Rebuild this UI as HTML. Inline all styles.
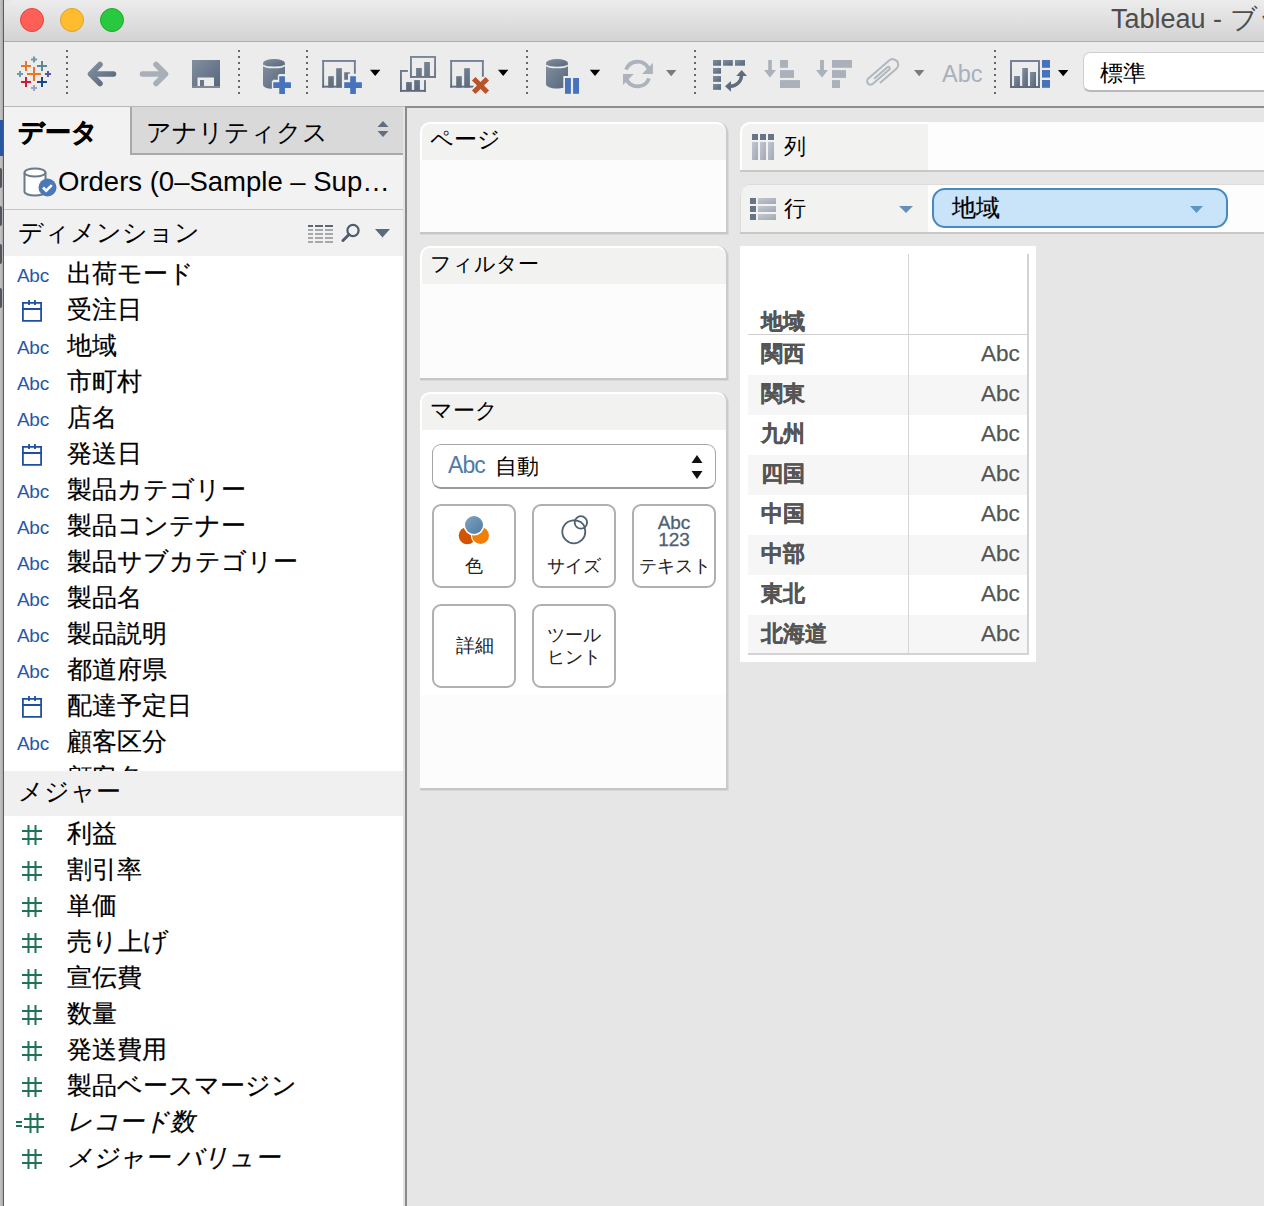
<!DOCTYPE html>
<html><head><meta charset="utf-8">
<style>
*{box-sizing:border-box;margin:0;padding:0}
html,body{width:1264px;height:1206px;overflow:hidden;background:#e6e6e6;font-family:"Liberation Sans",sans-serif;color:#000}
.a{position:absolute}
.t{position:absolute;white-space:nowrap;line-height:1}
.fld{font-size:25px;line-height:26px;-webkit-text-stroke:0.2px #000}
.card{position:absolute;width:308px;background:#fcfcfc;border-radius:10px 10px 0 0;border-right:2px solid #cbcbcb;border-bottom:2px solid #c6c6c6;overflow:hidden;box-shadow:1px 1px 0 #d9d9d9}
.hdr{position:absolute;left:0;top:0;width:306px;background:#f2f2f0;border-top:2px solid #fff;border-left:2px solid #fff;border-radius:10px 10px 0 0}
.mb{position:absolute;width:84px;height:84px;border:2px solid #b0b0b0;border-radius:9px;background:#fff}
.mbt{font-size:18px;color:#222;margin-top:2px}
.shelf{position:absolute;left:740px;width:524px;background:#fdfdfd;border-radius:10px 0 0 0;border-bottom:2px solid #c8c8c8;overflow:hidden}
.lab{position:absolute;left:0;top:0;width:188px;height:100%;background:#f2f2f1;border-top:2px solid #fff;border-left:2px solid #fff;border-radius:10px 0 0 0}
.rh{font-size:22px;font-weight:bold;color:#555;-webkit-text-stroke:0.35px #555}
.ab{font-size:22.5px;color:#555;-webkit-text-stroke:0.25px #555}
.abc{font-size:19px;color:#2856a3;line-height:20px;margin-top:3px;letter-spacing:-0.3px}
</style></head><body>
<!-- left background strip -->
<div class="a" style="left:0;top:0;width:4px;height:1206px;background:linear-gradient(90deg,#c4c4c4,#a4a4a4)"></div>
<div class="a" style="left:3px;top:0;width:1px;height:1206px;background:#5c5c5c"></div>
<div class="a" style="left:0;top:120px;width:3px;height:36px;background:#2a55a0"></div>
<div class="a" style="left:0;top:168px;width:2px;height:20px;background:#50555e;border-radius:0 2px 2px 0"></div>
<div class="a" style="left:0;top:206px;width:2px;height:20px;background:#50555e;border-radius:0 2px 2px 0"></div>
<div class="a" style="left:0;top:244px;width:2px;height:20px;background:#50555e;border-radius:0 2px 2px 0"></div>
<div class="a" style="left:0;top:288px;width:2px;height:20px;background:#50555e;border-radius:0 2px 2px 0"></div>
<!-- title bar -->
<div class="a" style="left:4px;top:0;width:1260px;height:42px;background:linear-gradient(#ececec,#d3d3d3);border-top-left-radius:9px;border-bottom:1px solid #adadad"></div>
<div class="a" style="left:20px;top:8px;width:24px;height:24px;border-radius:50%;background:#ff5f57;border:1px solid #e0443e"></div>
<div class="a" style="left:60px;top:8px;width:24px;height:24px;border-radius:50%;background:#febc2e;border:1px solid #dda028"></div>
<div class="a" style="left:100px;top:8px;width:24px;height:24px;border-radius:50%;background:#28c941;border:1px solid #1aab29"></div>
<div class="t" style="left:1111px;top:6px;font-size:27px;color:#4d4d4d">Tableau - ブック1</div>
<!-- toolbar -->
<div class="a" style="left:4px;top:42px;width:1260px;height:64px;background:#ececec"></div>
<div class="a" style="left:4px;top:106px;width:401px;height:1px;background:#b8b8b8"></div>
<div class="a" style="left:405px;top:106px;width:859px;height:2px;background:#8e8e8e"></div>


<!-- toolbar icons -->
<svg class="a" style="left:0;top:0" width="1264" height="106" viewBox="0 0 1264 106">
<defs>
<linearGradient id="gI" x1="0" y1="0" x2="1" y2="1"><stop offset="0" stop-color="#8290a0"/><stop offset="1" stop-color="#56657a"/></linearGradient>
<linearGradient id="gI2" gradientUnits="userSpaceOnUse" x1="0" y1="56" x2="0" y2="94"><stop offset="0" stop-color="#7a8799"/><stop offset="1" stop-color="#5a6779"/></linearGradient>
</defs>
<g fill="#666"><rect x="66" y="50" width="2" height="2"/><rect x="66" y="56" width="2" height="2"/><rect x="66" y="62" width="2" height="2"/><rect x="66" y="68" width="2" height="2"/><rect x="66" y="74" width="2" height="2"/><rect x="66" y="80" width="2" height="2"/><rect x="66" y="86" width="2" height="2"/><rect x="66" y="92" width="2" height="2"/><rect x="238" y="50" width="2" height="2"/><rect x="238" y="56" width="2" height="2"/><rect x="238" y="62" width="2" height="2"/><rect x="238" y="68" width="2" height="2"/><rect x="238" y="74" width="2" height="2"/><rect x="238" y="80" width="2" height="2"/><rect x="238" y="86" width="2" height="2"/><rect x="238" y="92" width="2" height="2"/><rect x="306" y="50" width="2" height="2"/><rect x="306" y="56" width="2" height="2"/><rect x="306" y="62" width="2" height="2"/><rect x="306" y="68" width="2" height="2"/><rect x="306" y="74" width="2" height="2"/><rect x="306" y="80" width="2" height="2"/><rect x="306" y="86" width="2" height="2"/><rect x="306" y="92" width="2" height="2"/><rect x="526" y="50" width="2" height="2"/><rect x="526" y="56" width="2" height="2"/><rect x="526" y="62" width="2" height="2"/><rect x="526" y="68" width="2" height="2"/><rect x="526" y="74" width="2" height="2"/><rect x="526" y="80" width="2" height="2"/><rect x="526" y="86" width="2" height="2"/><rect x="526" y="92" width="2" height="2"/><rect x="694" y="50" width="2" height="2"/><rect x="694" y="56" width="2" height="2"/><rect x="694" y="62" width="2" height="2"/><rect x="694" y="68" width="2" height="2"/><rect x="694" y="74" width="2" height="2"/><rect x="694" y="80" width="2" height="2"/><rect x="694" y="86" width="2" height="2"/><rect x="694" y="92" width="2" height="2"/><rect x="994" y="50" width="2" height="2"/><rect x="994" y="56" width="2" height="2"/><rect x="994" y="62" width="2" height="2"/><rect x="994" y="68" width="2" height="2"/><rect x="994" y="74" width="2" height="2"/><rect x="994" y="80" width="2" height="2"/><rect x="994" y="86" width="2" height="2"/><rect x="994" y="92" width="2" height="2"/></g>
<!-- tableau logo -->
<g stroke-width="2">
<path d="M27 74h14M34 67v14" stroke="#e97627"/>
<path d="M21 66h10M26 61v10" stroke="#e97627"/>
<path d="M37 66h10M42 61v10" stroke="#5b879b"/>
<path d="M21 82h10M26 77v10" stroke="#c72037"/>
<path d="M37 82h10M42 77v10" stroke="#1f457e"/>
<path d="M31 59.5h6M34 56.5v6" stroke="#7199a6"/>
<path d="M17 74h6M20 71v6" stroke="#7199a6"/>
<path d="M45 74h6M48 71v6" stroke="#59579a"/>
<path d="M31 88h6M34 85v6" stroke="#9ca3c4"/>
</g>
<!-- back / forward -->
<path d="M113.5 74H90.5M100 64.5L90.5 74L100 83.5" fill="none" stroke="url(#gI)" stroke-width="5.5" stroke-linecap="round" stroke-linejoin="round"/>
<path d="M142.5 74H165.5M156 64.5L165.5 74L156 83.5" fill="none" stroke="#a8afb8" stroke-width="5.5" stroke-linecap="round" stroke-linejoin="round"/>
<!-- save -->
<rect x="192" y="60" width="28" height="28" fill="url(#gI)"/>
<rect x="192" y="86" width="28" height="2" fill="#7d8a9a"/>
<rect x="197.5" y="77.5" width="16.5" height="8.5" fill="#ececec"/>
<rect x="200" y="80" width="4" height="6" fill="#6a7686"/>
<!-- new datasource -->
<path d="M263 63v21.4c0 2.6 4 4.4 10 4.4V79.8h6V74h6V63c-2 2.6-6 3.9-11 3.9s-9-1.3-11-3.9z" fill="url(#gI)"/>
<ellipse cx="274" cy="62.9" rx="11" ry="3.9" fill="url(#gI)"/><path d="M263 65.2c2.5 3 19.5 3 22 0" fill="none" stroke="#ececec" stroke-width="1.6"/>
<path d="M277.85 74.8h8.5v6.0h6.0v8.5h-6.0v6.0h-8.5v-6.0h-6.0v-8.5h6.0z" fill="#ececec"/><path d="M279.25 76.2h5.7v6.0h6.0v5.7h-6.0v6.0h-5.7v-6.0h-6.0v-5.7h6.0z" fill="#4773ba"/>
<!-- new worksheet -->
<g fill="url(#gI2)">
<rect x="322.2" y="60" width="33.6" height="1.9"/><rect x="322.2" y="60" width="1.9" height="27.6"/><rect x="353.9" y="60" width="1.9" height="13.7"/><rect x="322.2" y="85.7" width="19.7" height="1.9"/>
<rect x="328.2" y="76.2" width="5.6" height="11.4"/><rect x="336.2" y="68.2" width="5.7" height="19.4"/>
<path d="M344.2 72.2h5.7v1.5h-1.9v6.1h-3.8z"/>
</g>
<path d="M348.8 74.8h8.5v6.0h6.0v8.5h-6.0v6.0h-8.5v-6.0h-6.0v-8.5h6.0z" fill="#ececec"/><path d="M350.2 76.2h5.7v6.0h6.0v5.7h-6.0v6.0h-5.7v-6.0h-6.0v-5.7h6.0z" fill="#4773ba"/>
<path d="M370 69.8h10.4l-5.2 6.2z" fill="#000"/>
<!-- duplicate -->
<g fill="url(#gI2)">
<rect x="410" y="56" width="26" height="1.9"/><rect x="410" y="56" width="1.9" height="21.9"/><rect x="434.1" y="56" width="1.9" height="21.9"/><rect x="410" y="76" width="26" height="1.9"/>
<rect x="416.1" y="68" width="5.7" height="8.5"/><rect x="424.2" y="62" width="5.7" height="14.5"/>
<rect x="400" y="70" width="7.9" height="1.9"/><rect x="400" y="70" width="1.9" height="21.8"/><rect x="400" y="89.9" width="25.9" height="1.9"/><rect x="424.1" y="80.1" width="1.8" height="11.7"/>
<rect x="406.1" y="82.1" width="5.7" height="8.6"/><rect x="414.2" y="80.1" width="5.7" height="10.6"/>
</g>
<!-- clear -->
<g fill="url(#gI2)">
<rect x="450.2" y="60" width="33.6" height="1.9"/><rect x="450.2" y="60" width="1.9" height="27.6"/><rect x="481.9" y="60" width="1.9" height="16.8"/><rect x="450.2" y="85.7" width="23.5" height="1.9"/>
<rect x="456.2" y="76.2" width="5.6" height="11.4"/><rect x="464.2" y="68.2" width="5.7" height="19.4"/>
</g>
<path d="M473.7 78.8L487.3 92.2M487.3 78.8L473.7 92.2" stroke="#ececec" stroke-width="8"/>
<path d="M473.7 78.8L487.3 92.2M487.3 78.8L473.7 92.2" stroke="#b9532c" stroke-width="5"/>
<path d="M498 69.8h10.4l-5.2 6.2z" fill="#000"/>
<!-- pause datasource -->
<path d="M546 63v21c0 2.6 4.5 4.5 11 4.5c2.5 0 4.5-0.3 6.3-0.8V76H568V63c-2 2.6-6 4-11 4s-9-1.4-11-4z" fill="url(#gI)"/>
<ellipse cx="557" cy="63" rx="11" ry="4" fill="url(#gI)"/><path d="M546 65.3c2.5 3 19.5 3 22 0" fill="none" stroke="#ececec" stroke-width="1.6"/>
<rect x="565" y="78" width="5.9" height="15.8" fill="#4773ba"/>
<rect x="573.1" y="78" width="5.9" height="15.8" fill="#4773ba"/>
<path d="M589.8 69.8h10.4l-5.2 6.2z" fill="#000"/>
<!-- refresh -->
<path d="M626 69.7A12.3 12.3 0 0 1 648.36 68.23" fill="none" stroke="#acb3bc" stroke-width="3.8"/>
<path d="M652.9 62.8V73.9H642.1z" fill="#acb3bc"/>
<path d="M649 78.3A12.3 12.3 0 0 1 626.64 79.77" fill="none" stroke="#acb3bc" stroke-width="3.8"/>
<path d="M623 74.1H633.8L623 85z" fill="#acb3bc"/>
<path d="M666 70h10.4l-5.2 6.2z" fill="#7b7b7b"/>
<!-- swap -->
<g fill="url(#gI)">
<rect x="713" y="60" width="8" height="5.7"/><rect x="723" y="60" width="9.8" height="5.7"/><rect x="735" y="60" width="10" height="5.7"/>
<rect x="713" y="68" width="8" height="5.7"/><rect x="713" y="76" width="8" height="5.8"/><rect x="713" y="84" width="8" height="5.8"/>
</g>
<path d="M730 86.2A11 11 0 0 0 741.5 75" fill="none" stroke="#5f6c7e" stroke-width="3.4"/>
<path d="M725 86.3l6-5.3v10.8z" fill="#5f6c7e"/>
<path d="M741.7 70l5.3 6h-10.8z" fill="#5f6c7e"/>
<!-- sort -->
<g fill="#aab1bb">
<rect x="768.2" y="60" width="3.6" height="10.5"/><path d="M764 70.1h12l-6 7.4z"/>
<rect x="780" y="60" width="8" height="7.8"/><rect x="780" y="70.1" width="14" height="7.8"/><rect x="780" y="80.1" width="20" height="7.9"/>
<rect x="820.1" y="60" width="3.8" height="10.5"/><path d="M816 70.1h12l-6 7.4z"/>
<rect x="832" y="60" width="20" height="7.8"/><rect x="832" y="70.1" width="14" height="7.8"/><rect x="832" y="80.1" width="8" height="7.9"/>
</g>
<!-- paperclip -->
<path transform="translate(882 73.3) rotate(-41)" d="M-8 6L13.8 6A5.5 5.5 0 0 0 13.8 -5L-13.8 -5A3.5 3.5 0 0 0 -13.8 2L8 2A1.5 1.5 0 0 0 8 -1L-9.6 -1" fill="none" stroke="#b0b7bf" stroke-width="2"/>
<path d="M914 70h10.4l-5.2 6.2z" fill="#7b7b7b"/>
<text x="942" y="82" font-family="Liberation Sans" font-size="23.5" fill="#a9b0ba">Abc</text>
<!-- show me -->
<path d="M1011 61h28v26h-28z" fill="none" stroke="url(#gI2)" stroke-width="2"/>
<rect x="1014" y="76" width="5.9" height="10.5" fill="url(#gI)"/>
<rect x="1022.2" y="68" width="5.7" height="18.5" fill="url(#gI)"/>
<rect x="1030" y="72" width="6" height="14.5" fill="url(#gI)"/>
<rect x="1042" y="60" width="8" height="7.8" fill="#4773ba"/><rect x="1042" y="70" width="8" height="7.6" fill="#4773ba"/><rect x="1042" y="80" width="8" height="7.8" fill="#4773ba"/>
<path d="M1058 70h10.4l-5.2 6.2z" fill="#000"/>
</svg>
<!-- fit dropdown -->
<div class="a" style="left:1083px;top:52px;width:200px;height:40px;background:#fff;border-radius:7px;border:1px solid #cfcfcf;border-bottom:2px solid #b9b9b9"></div>
<div class="t" style="left:1100px;top:63px;font-size:22.5px">標準</div>

<!-- left panel -->
<div class="a" style="left:4px;top:107px;width:399px;height:1099px;background:#fff"></div>
<div class="a" style="left:4px;top:107px;width:126px;height:103px;background:#f2f2f2"></div>
<div class="a" style="left:130px;top:107px;width:2px;height:48px;background:#a9a9a9"></div>
<div class="a" style="left:132px;top:107px;width:271px;height:47px;background:#d9d9d9"></div>
<div class="a" style="left:132px;top:153px;width:271px;height:2px;background:#a9a9a9"></div>
<div class="a" style="left:4px;top:155px;width:399px;height:55px;background:#f2f2f2"></div>
<div class="a" style="left:4px;top:209px;width:399px;height:1px;background:#c6c6c6"></div>
<div class="a" style="left:4px;top:210px;width:399px;height:46px;background:#f1f1f1"></div>
<div class="a" style="left:4px;top:771px;width:399px;height:45px;background:#f0f0f0"></div>
<!-- separator -->
<div class="a" style="left:403px;top:107px;width:2px;height:1099px;background:#e4e4e4"></div>
<div class="a" style="left:405px;top:107px;width:2px;height:1099px;background:#8a8a8a"></div>

<!-- dims list -->
<div class="a" style="left:4px;top:256px;width:399px;height:515px;overflow:hidden">
<div class="t abc" style="left:13px;top:7px">Abc</div>
<div class="t fld" style="left:63px;top:4px">出荷モード</div>
<svg class="a" style="left:17px;top:43px" width="22" height="24" viewBox="0 0 22 24"><path d="M1.9 3.8h18.2v18.1h-18.2z M1.9 10h18.2 M8 0.9v5 M14 0.9v5" fill="none" stroke="#1f4fa0" stroke-width="1.8"/></svg>
<div class="t fld" style="left:63px;top:40px">受注日</div>
<div class="t abc" style="left:13px;top:79px">Abc</div>
<div class="t fld" style="left:63px;top:76px">地域</div>
<div class="t abc" style="left:13px;top:115px">Abc</div>
<div class="t fld" style="left:63px;top:112px">市町村</div>
<div class="t abc" style="left:13px;top:151px">Abc</div>
<div class="t fld" style="left:63px;top:148px">店名</div>
<svg class="a" style="left:17px;top:187px" width="22" height="24" viewBox="0 0 22 24"><path d="M1.9 3.8h18.2v18.1h-18.2z M1.9 10h18.2 M8 0.9v5 M14 0.9v5" fill="none" stroke="#1f4fa0" stroke-width="1.8"/></svg>
<div class="t fld" style="left:63px;top:184px">発送日</div>
<div class="t abc" style="left:13px;top:223px">Abc</div>
<div class="t fld" style="left:63px;top:220px">製品カテゴリー</div>
<div class="t abc" style="left:13px;top:259px">Abc</div>
<div class="t fld" style="left:63px;top:256px">製品コンテナー</div>
<div class="t abc" style="left:13px;top:295px">Abc</div>
<div class="t fld" style="left:63px;top:292px">製品サブカテゴリー</div>
<div class="t abc" style="left:13px;top:331px">Abc</div>
<div class="t fld" style="left:63px;top:328px">製品名</div>
<div class="t abc" style="left:13px;top:367px">Abc</div>
<div class="t fld" style="left:63px;top:364px">製品説明</div>
<div class="t abc" style="left:13px;top:403px">Abc</div>
<div class="t fld" style="left:63px;top:400px">都道府県</div>
<svg class="a" style="left:17px;top:439px" width="22" height="24" viewBox="0 0 22 24"><path d="M1.9 3.8h18.2v18.1h-18.2z M1.9 10h18.2 M8 0.9v5 M14 0.9v5" fill="none" stroke="#1f4fa0" stroke-width="1.8"/></svg>
<div class="t fld" style="left:63px;top:436px">配達予定日</div>
<div class="t abc" style="left:13px;top:475px">Abc</div>
<div class="t fld" style="left:63px;top:472px">顧客区分</div>
<div class="t abc" style="left:13px;top:511px">Abc</div>
<div class="t fld" style="left:63px;top:508px">顧客名</div>
</div>
<!-- measures -->
<svg class="a" style="left:22px;top:825px" width="20" height="20" viewBox="0 0 20 20"><path d="M6.5 0v20M13.5 0v20M0 6h20M0 14h20" stroke="#1f7355" stroke-width="2"/></svg>
<div class="t fld" style="left:67px;top:820px;">利益</div>
<svg class="a" style="left:22px;top:861px" width="20" height="20" viewBox="0 0 20 20"><path d="M6.5 0v20M13.5 0v20M0 6h20M0 14h20" stroke="#1f7355" stroke-width="2"/></svg>
<div class="t fld" style="left:67px;top:856px;">割引率</div>
<svg class="a" style="left:22px;top:897px" width="20" height="20" viewBox="0 0 20 20"><path d="M6.5 0v20M13.5 0v20M0 6h20M0 14h20" stroke="#1f7355" stroke-width="2"/></svg>
<div class="t fld" style="left:67px;top:892px;">単価</div>
<svg class="a" style="left:22px;top:933px" width="20" height="20" viewBox="0 0 20 20"><path d="M6.5 0v20M13.5 0v20M0 6h20M0 14h20" stroke="#1f7355" stroke-width="2"/></svg>
<div class="t fld" style="left:67px;top:928px;">売り上げ</div>
<svg class="a" style="left:22px;top:969px" width="20" height="20" viewBox="0 0 20 20"><path d="M6.5 0v20M13.5 0v20M0 6h20M0 14h20" stroke="#1f7355" stroke-width="2"/></svg>
<div class="t fld" style="left:67px;top:964px;">宣伝費</div>
<svg class="a" style="left:22px;top:1005px" width="20" height="20" viewBox="0 0 20 20"><path d="M6.5 0v20M13.5 0v20M0 6h20M0 14h20" stroke="#1f7355" stroke-width="2"/></svg>
<div class="t fld" style="left:67px;top:1000px;">数量</div>
<svg class="a" style="left:22px;top:1041px" width="20" height="20" viewBox="0 0 20 20"><path d="M6.5 0v20M13.5 0v20M0 6h20M0 14h20" stroke="#1f7355" stroke-width="2"/></svg>
<div class="t fld" style="left:67px;top:1036px;">発送費用</div>
<svg class="a" style="left:22px;top:1077px" width="20" height="20" viewBox="0 0 20 20"><path d="M6.5 0v20M13.5 0v20M0 6h20M0 14h20" stroke="#1f7355" stroke-width="2"/></svg>
<div class="t fld" style="left:67px;top:1072px;">製品ベースマージン</div>
<div class="a" style="left:16px;top:1121px;width:6px;height:2px;background:#1f7355"></div><div class="a" style="left:16px;top:1125px;width:6px;height:2px;background:#1f7355"></div>
<svg class="a" style="left:24px;top:1113px" width="20" height="20" viewBox="0 0 20 20"><path d="M6.5 0v20M13.5 0v20M0 6h20M0 14h20" stroke="#1f7355" stroke-width="2"/></svg>
<div class="t fld" style="left:67px;top:1108px;font-style:italic">レコード数</div>
<svg class="a" style="left:22px;top:1149px" width="20" height="20" viewBox="0 0 20 20"><path d="M6.5 0v20M13.5 0v20M0 6h20M0 14h20" stroke="#1f7355" stroke-width="2"/></svg>
<div class="t fld" style="left:67px;top:1144px;font-style:italic">メジャー<span style="margin-left:7px">バリュー</span></div>

<!-- tabs text -->
<div class="t" style="left:18px;top:119px;font-size:26px;font-weight:bold;-webkit-text-stroke:0.5px #000">データ</div>
<div class="t" style="left:146px;top:120px;font-size:25px">アナリティクス</div>
<svg class="a" style="left:377px;top:121px" width="12" height="16" viewBox="0 0 12 16"><path d="M6 0L11.5 6H0.5z M6 16L11.5 10H0.5z" fill="#5f6e80"/></svg>
<!-- datasource -->
<svg class="a" style="left:22px;top:166px" width="36" height="32" viewBox="0 0 36 32"><path d="M2.5 6.5v19c0 2.5 5 4 10.5 4s10.5-1.5 10.5-4v-19" fill="#fff" stroke="#6b7a8a" stroke-width="2"/><ellipse cx="13" cy="6.5" rx="10.5" ry="4" fill="#fff" stroke="#6b7a8a" stroke-width="2"/><circle cx="25.5" cy="21.5" r="9" fill="#4a78b8"/><path d="M21 21.5l3.2 3.2 5.6-5.6" fill="none" stroke="#fff" stroke-width="2.6"/></svg>
<div class="t" style="left:58px;top:168px;font-size:27.5px">Orders (0–Sample – Sup…</div>
<!-- dims header -->
<div class="t" style="left:18px;top:220px;font-size:25px">ディメンション</div>
<svg class="a" style="left:308px;top:225px" width="25" height="19" viewBox="0 0 25 19"><g fill="#5b6778"><rect x="0" y="0" width="5" height="2"/><rect x="7" y="0" width="8" height="2"/><rect x="17" y="0" width="8" height="2"/></g><g fill="#a8a8a8"><rect x="0" y="4" width="5" height="2"/><rect x="7" y="4" width="8" height="2"/><rect x="17" y="4" width="8" height="2"/><rect x="0" y="8" width="5" height="2"/><rect x="7" y="8" width="8" height="2"/><rect x="17" y="8" width="8" height="2"/><rect x="0" y="12" width="5" height="2"/><rect x="7" y="12" width="8" height="2"/><rect x="17" y="12" width="8" height="2"/><rect x="0" y="16" width="5" height="2"/><rect x="7" y="16" width="8" height="2"/><rect x="17" y="16" width="8" height="2"/></g></svg>
<svg class="a" style="left:341px;top:223px" width="20" height="20" viewBox="0 0 20 20"><circle cx="12" cy="7.5" r="5.6" fill="none" stroke="#4f5d6e" stroke-width="2.2"/><path d="M8 11.5L2 17.5" stroke="#4f5d6e" stroke-width="3" stroke-linecap="round"/></svg>
<svg class="a" style="left:375px;top:229px" width="15" height="9" viewBox="0 0 15 9"><path d="M0 0h15L7.5 8.5z" fill="#5b6a7c"/></svg>
<!-- measures header -->
<div class="t" style="left:18px;top:779px;font-size:25px">メジャー</div>


<!-- middle cards -->
<div class="card" style="left:420px;top:122px;height:112px"><div class="hdr" style="height:38px"></div></div>
<div class="t" style="left:430px;top:128px;font-size:23px">ページ</div>
<div class="card" style="left:420px;top:246px;height:134px"><div class="hdr" style="height:38px"></div></div>
<div class="t" style="left:430px;top:253px;font-size:21px">フィルター</div>
<div class="card" style="left:420px;top:392px;height:398px"><div class="hdr" style="height:38px"></div><div class="a" style="left:0;top:38px;width:306px;height:265px;background:#fff"></div></div>
<div class="t" style="left:430px;top:401px;font-size:21.5px">マーク</div>
<div class="a" style="left:432px;top:444px;width:284px;height:45px;border-radius:9px;border:1.5px solid #a6a6a6;border-bottom:2.5px solid #9a9a9a;background:#fff"></div>
<div class="t" style="left:448px;top:454px;font-size:23px;letter-spacing:-0.9px;color:#4e7ca8">Abc</div>
<div class="t" style="left:495px;top:457px;font-size:21.5px">自動</div>
<svg class="a" style="left:691px;top:455px" width="12" height="24" viewBox="0 0 12 24"><path d="M6 0L11.5 8H0.5z M6 24L11.5 16H0.5z" fill="#111"/></svg>
<div class="mb" style="left:432px;top:504px"></div>
<div class="mb" style="left:532px;top:504px"></div>
<div class="mb" style="left:632px;top:504px"></div>
<div class="mb" style="left:432px;top:604px"></div>
<div class="mb" style="left:532px;top:604px"></div>
<svg class="a" style="left:455px;top:512px" width="38" height="36" viewBox="0 0 38 36">
<defs><linearGradient id="gB" x1="0" y1="0" x2="1" y2="1"><stop offset="0" stop-color="#7ea2c2"/><stop offset="1" stop-color="#4f7ba3"/></linearGradient></defs>
<circle cx="12.3" cy="23.6" r="8.6" fill="#d35400"/>
<circle cx="25.5" cy="23.6" r="9.1" fill="#f07f09" stroke="#fff" stroke-width="1.2"/>
<circle cx="19" cy="13" r="10.5" fill="#fff"/>
<circle cx="19" cy="13" r="9" fill="url(#gB)"/>
</svg>
<svg class="a" style="left:558px;top:512px" width="32" height="34" viewBox="0 0 32 34"><circle cx="15.8" cy="19.8" r="11.5" fill="none" stroke="#4f6074" stroke-width="1.8"/><circle cx="22.9" cy="10.4" r="6.2" fill="#fff" stroke="#4f6074" stroke-width="1.8"/><path d="M15.8 8.3A11.5 11.5 0 0 1 26.8 15.2" fill="none" stroke="#4f6074" stroke-width="1.8"/></svg>
<div class="t mbt" style="left:465px;top:555px">色</div>
<div class="t mbt" style="left:547px;top:555px">サイズ</div>
<div class="t" style="left:657px;top:514px;font-size:19px;color:#4f6074;line-height:17px;text-align:center;width:34px;-webkit-text-stroke:0.3px #4f6074">Abc<br>123</div>
<div class="t mbt" style="left:639px;top:555px">テキスト</div>
<div class="t mbt" style="left:456px;top:635px;font-size:18.5px">詳細</div>
<div class="t mbt" style="left:547px;top:622px;line-height:22px">ツール<br>ヒント</div>

<!-- shelves -->
<div class="shelf" style="top:122px;height:50px"><div class="lab"></div></div>
<svg class="a" style="left:752px;top:134px" width="23" height="27" viewBox="0 0 23 27"><defs><linearGradient id="gC" x1="0" y1="0" x2="1" y2="1"><stop offset="0" stop-color="#c3c8cf"/><stop offset="1" stop-color="#a0a8b3"/></linearGradient></defs><g fill="#687588"><rect x="0" y="0" width="6" height="6"/><rect x="8" y="0" width="6" height="6"/><rect x="16" y="0" width="6" height="6"/></g><g fill="url(#gC)"><rect x="0" y="8" width="6" height="18"/><rect x="8" y="8" width="6" height="18"/><rect x="16" y="8" width="6" height="18"/></g></svg>
<div class="t" style="left:784px;top:136px;font-size:22px">列</div>
<div class="shelf" style="top:184px;height:50px;border-top:1px solid #dcdcdc"><div class="lab" style="border-top:0;border-left:1px solid #dcdcdc"></div></div>
<svg class="a" style="left:750px;top:198px" width="27" height="23" viewBox="0 0 27 23"><g fill="#687588"><rect x="0" y="0" width="6" height="6"/><rect x="0" y="8" width="6" height="6"/><rect x="0" y="16" width="6" height="6"/></g><g fill="url(#gC)"><rect x="8" y="0" width="18" height="6"/><rect x="8" y="8" width="18" height="6"/><rect x="8" y="16" width="18" height="6"/></g></svg>
<div class="t" style="left:784px;top:198px;font-size:22px">行</div>
<svg class="a" style="left:899px;top:206px" width="14" height="8" viewBox="0 0 14 8"><path d="M0 0h14L7 7z" fill="#6690ba"/></svg>
<div class="a" style="left:932px;top:188px;width:296px;height:40px;border-radius:13px;border:2px solid #4a88bb;background:#c9e3f8"></div>
<div class="t" style="left:952px;top:196px;font-size:24px;-webkit-text-stroke:0.2px #000">地域</div>
<svg class="a" style="left:1190px;top:206px" width="14" height="8" viewBox="0 0 14 8"><path d="M0 0h13L6.5 7z" fill="#5b97c6"/></svg>

<!-- table -->
<div class="a" style="left:740px;top:246px;width:296px;height:416px;background:#fff"></div>
<div class="t rh" style="left:761px;top:343px">関西</div>
<div class="t ab" style="left:981px;top:343px">Abc</div>
<div class="a" style="left:748px;top:375px;width:280px;height:40px;background:#f6f6f6"></div>
<div class="t rh" style="left:761px;top:383px">関東</div>
<div class="t ab" style="left:981px;top:383px">Abc</div>
<div class="t rh" style="left:761px;top:423px">九州</div>
<div class="t ab" style="left:981px;top:423px">Abc</div>
<div class="a" style="left:748px;top:455px;width:280px;height:40px;background:#f6f6f6"></div>
<div class="t rh" style="left:761px;top:463px">四国</div>
<div class="t ab" style="left:981px;top:463px">Abc</div>
<div class="t rh" style="left:761px;top:503px">中国</div>
<div class="t ab" style="left:981px;top:503px">Abc</div>
<div class="a" style="left:748px;top:535px;width:280px;height:40px;background:#f6f6f6"></div>
<div class="t rh" style="left:761px;top:543px">中部</div>
<div class="t ab" style="left:981px;top:543px">Abc</div>
<div class="t rh" style="left:761px;top:583px">東北</div>
<div class="t ab" style="left:981px;top:583px">Abc</div>
<div class="a" style="left:748px;top:615px;width:280px;height:40px;background:#f6f6f6"></div>
<div class="t rh" style="left:761px;top:623px">北海道</div>
<div class="t ab" style="left:981px;top:623px">Abc</div>
<div class="t rh" style="left:761px;top:311px">地域</div>
<div class="a" style="left:908px;top:254px;width:1px;height:400px;background:#d6d6d6"></div>
<div class="a" style="left:1027px;top:254px;width:2px;height:401px;background:#d3d3d3"></div>
<div class="a" style="left:748px;top:334px;width:280px;height:1px;background:#d0d0d0"></div>
<div class="a" style="left:748px;top:653px;width:281px;height:2px;background:#d3d3d3"></div>

<div id="content"></div>
</body></html>
